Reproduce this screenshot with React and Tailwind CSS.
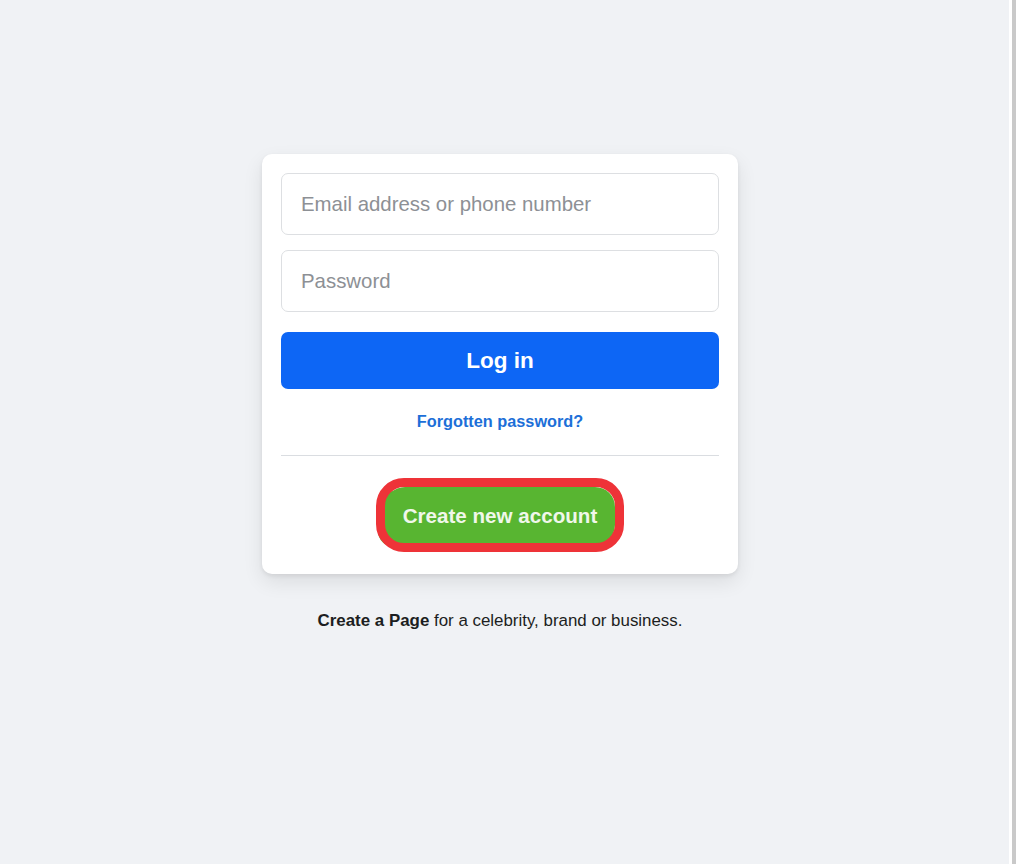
export default function App() {
  const font = { fontFamily: '"Liberation Sans", Helvetica, Arial, sans-serif' };
  return (
    <div className="flex h-[864px] w-[1016px] bg-[#f0f2f5]" style={font}>
      <div className="flex-1 pt-[154px] pl-[262px]">
        <div className="w-[476px] rounded-[10px] bg-white px-[19px] pt-[19px] pb-[29px] shadow-[0_2px_4px_rgba(0,0,0,0.07),0_8px_20px_rgba(0,0,0,0.09)]">
          <div className="flex h-[62px] items-center rounded-[7px] border border-[#dddfe2] px-[19px] text-[20.4px] text-[#8d9095]">
            Email address or phone number
          </div>
          <div className="mt-[15px] flex h-[62px] items-center rounded-[7px] border border-[#dddfe2] px-[19px] text-[20.4px] text-[#8d9095]">
            Password
          </div>
          <div className="mt-[20px] flex h-[57px] items-center justify-center rounded-[7px] bg-[#0d66f5] pt-[1px] text-[22.5px] font-bold text-white">
            Log in
          </div>
          <div className="mt-[22px] flex justify-center text-[16.3px] font-bold leading-[20px] text-[#1c6fd8]">
            Forgotten password?
          </div>
          <div className="mt-[24px] h-px bg-[#dadde1]" />
          <div className="mt-[31px] flex justify-center">
            <div className="relative">
              <div className="absolute left-[-7px] top-[4px] h-[56px] w-[226px] rounded-[16px] bg-[#58b531]" />
              <div className="relative flex h-[58px] w-[230px] items-center justify-center rounded-[20px] bg-[#58b531] text-[20.6px] font-bold text-[#f0f7ea]">
                Create new account
              </div>
              <div className="absolute left-[-9px] right-[-9px] top-[-9px] bottom-[-7px] rounded-[28px] border-[9px] border-[#ee3338]" />
            </div>
          </div>
        </div>
        <div className="mt-[37px] w-[476px] text-center text-[16.9px] leading-[20px] text-[#1c1e21]">
          <span className="font-bold">Create a Page</span> for a celebrity, brand or business.
        </div>
      </div>
      <div className="w-[3px] bg-white" />
      <div className="w-[4px] bg-[#c9c9c9]" />
    </div>
  );
}
